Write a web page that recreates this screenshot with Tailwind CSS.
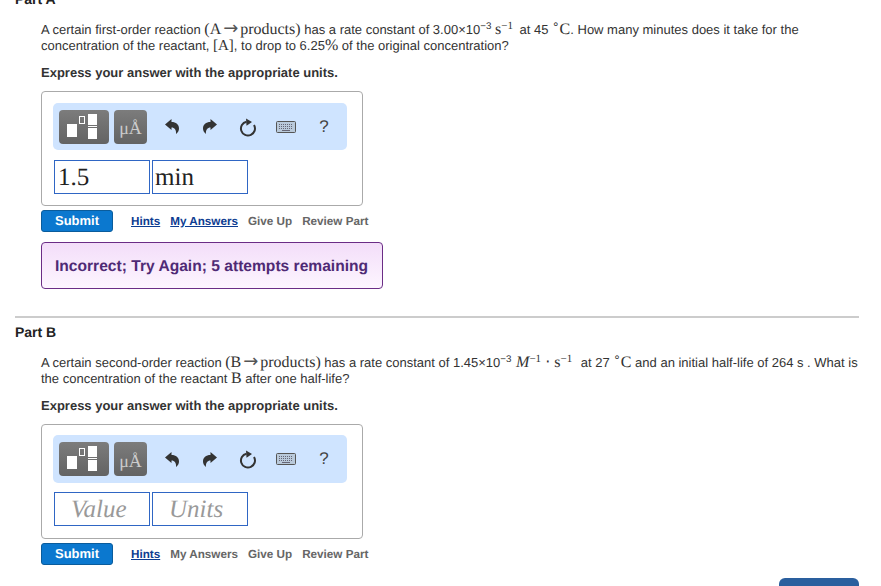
<!DOCTYPE html>
<html lang="en">
<head>
    <meta charset="UTF-8">
    <meta name="viewport" content="width=device-width, initial-scale=1.0">
    <title>Part A and B</title>
    <script src="https://cdn.jsdelivr.net/npm/@tailwindcss/browser@4"></script>
</head>
<body class="bg-white h-[586px] overflow-hidden relative [text-rendering:geometricPrecision] font-['Liberation_Sans',Arial,sans-serif] text-[13px] leading-[16px] text-[#333]">
    <div class="pl-[15px] w-[859px] -mt-[9px]">
        <!-- Part A -->
        <h2 class="text-[14px] leading-[16px] font-bold text-[#222]">Part A</h2>
        <div class="pl-[26px] pt-[15px]">
            <p class="w-[800px]">A certain first-order reaction <span class="font-['Liberation_Serif',serif] text-[16px]">(A<span class="inline-block w-[19px] text-center font-['DejaVu_Sans',sans-serif] text-[18px] leading-[0] text-[#555]">→</span>products)</span> has a rate constant of 3.00×10<sup>−3</sup> <span class="font-['Liberation_Serif',serif] text-[16px]">s<sup class="text-[11px]">−1</sup></span><span class="ml-[3px]"> at 45</span> <span class="font-['Liberation_Serif',serif] text-[16px]"><sup>∘</sup>C</span>. How many minutes does it take for the concentration of the reactant, <span class="font-['Liberation_Serif',serif] text-[15px]">[A]</span>, to drop to 6.25<span class="font-['Liberation_Serif',serif] text-[16px]">%</span> of the original concentration?</p>
            <p class="mt-[11px] font-bold">Express your answer with the appropriate units.</p>

            <div class="mt-[10px] w-[322px] h-[115px] border border-[#aaa] rounded-[4px] pt-[11px] pl-[11px]">
                <div class="w-[294px] h-[47px] bg-[#cfe4ff] rounded-[5px] flex items-center pl-[6px]">
                    <div class="w-[50px] h-[34px] rounded-[4px] bg-gradient-to-b from-[#7c7c7c] to-[#636363]">
                        <svg width="50" height="34" fill="#fff"><rect x="8" y="14" width="10" height="13"/><rect x="20.5" y="6.5" width="5" height="7" fill="none" stroke="#fff"/><rect x="29" y="4" width="9" height="11"/><rect x="29" y="16" width="9" height="1"/><rect x="29" y="18" width="9" height="11"/></svg>
                    </div>
                    <div class="ml-[5px] w-[33px] h-[34px] rounded-[4px] bg-gradient-to-b from-[#7c7c7c] to-[#636363] flex items-center justify-center font-['Liberation_Serif',serif] text-[18px] text-[#ccc] pt-[3px]">μÅ</div>
                    <div class="ml-[6px] flex items-center">
                        <div class="w-[38px] flex justify-center">
                            <svg width="16" height="17" viewBox="0 0 16 17" fill="#333"><path d="M1 6.500 L7.500 1 V4 C12 4 15 6.500 15 10.500 C15 12.500 14 14.500 12 16 C12.500 12 10.500 9.500 7.500 9.500 V12 Z"/></svg>
                        </div>
                        <div class="w-[38px] flex justify-center">
                            <svg width="16" height="17" viewBox="0 0 16 17" fill="#333"><path d="M15 6.500 L8.500 1 V4 C4 4 1 6.500 1 10.500 C1 12.500 2 14.500 4 16 C3.500 12 5.500 9.500 8.500 9.500 V12 Z"/></svg>
                        </div>
                        <div class="w-[38px] flex justify-center">
                            <svg width="18" height="20" viewBox="0 0 18 20" fill="none"><path d="M7.500 4.700 A7 7 0 1 0 15 8" stroke="#333" stroke-width="2"/><path d="M7 1.500 L13 5 L7.500 8.800 Z" fill="#333"/></svg>
                        </div>
                        <div class="w-[38px] flex justify-center">
                            <svg width="20" height="12" viewBox="0 0 20 12"><rect x="0.500" y="0.500" width="19" height="11" rx="1" fill="#b9c9da" stroke="#555"/><path d="M3 3.500H17M3 5.500H17M3 7.500H17" stroke="#667" stroke-dasharray="1 1"/><path d="M6 9.500H14" stroke="#667"/></svg>
                        </div>
                        <div class="w-[38px] text-center text-[17px] text-[#444]">?</div>
                    </div>
                </div>
                <div class="mt-[10px] ml-[1px] flex gap-[2px] font-['Liberation_Serif',serif] text-[25px] text-[#222]">
                    <div class="w-[96px] h-[34px] border border-[#2f66c4] pl-[3px] leading-[33px]">1.5</div>
                    <div class="w-[96px] h-[34px] border border-[#2f66c4] pl-[2px] leading-[33px]">min</div>
                </div>
            </div>

            <div class="mt-[4px] flex items-center font-bold text-[11.7px]">
                <div class="w-[72px] h-[22px] rounded-[3px] bg-[#0b78cf] border border-[#0a5c9c] text-white text-[13px] leading-[20px] text-center">Submit</div>
                <div class="ml-[18px] mt-[2px] flex gap-[10px]">
                    <a class="text-[#0d3c91] underline">Hints</a>
                    <a class="text-[#0d3c91] underline">My Answers</a>
                    <span class="text-[#666]">Give Up</span>
                    <span class="text-[#666]">Review Part</span>
                </div>
            </div>

            <div class="mt-[10px] w-[342px] h-[47px] border border-[#6b2d86] rounded-[4px] bg-gradient-to-b from-[#f3def9] to-[#fdf5ff] pl-[13px] text-[15.6px] leading-[47px] font-bold text-[#4f2a75]">Incorrect; Try Again; 5 attempts remaining</div>
        </div>

        <hr class="mt-[27px] border-0 h-[2px] bg-[#ccc]">

        <!-- Part B -->
        <h2 class="mt-[6px] text-[14px] leading-[16px] font-bold text-[#222]">Part B</h2>
        <div class="pl-[26px] pt-[15px]">
            <p>A certain second-order reaction <span class="font-['Liberation_Serif',serif] text-[16px]">(B<span class="inline-block w-[19px] text-center font-['DejaVu_Sans',sans-serif] text-[18px] leading-[0] text-[#555]">→</span>products)</span> has a rate constant of 1.45×10<sup>−3</sup> <span class="font-['Liberation_Serif',serif] text-[16px]"><i class="ml-[1px]">M</i><sup class="text-[11px]">−1</sup> ⋅ s<sup class="text-[11px]">−1</sup></span><span class="ml-[5px]"> at 27</span> <span class="font-['Liberation_Serif',serif] text-[16px]"><sup>∘</sup>C</span> and an initial half-life of 264 s . What is the concentration of the reactant <span class="font-['Liberation_Serif',serif] text-[16px]">B</span> after one half-life?</p>
            <p class="mt-[11px] font-bold">Express your answer with the appropriate units.</p>

            <div class="mt-[10px] w-[322px] h-[115px] border border-[#aaa] rounded-[4px] pt-[10px] pl-[11px]">
                <div class="w-[294px] h-[48px] bg-[#cfe4ff] rounded-[5px] flex items-center pl-[6px]">
                    <div class="w-[50px] h-[34px] rounded-[4px] bg-gradient-to-b from-[#7c7c7c] to-[#636363]">
                        <svg width="50" height="34" fill="#fff"><rect x="8" y="14" width="10" height="13"/><rect x="20.5" y="6.5" width="5" height="7" fill="none" stroke="#fff"/><rect x="29" y="4" width="9" height="11"/><rect x="29" y="16" width="9" height="1"/><rect x="29" y="18" width="9" height="11"/></svg>
                    </div>
                    <div class="ml-[5px] w-[33px] h-[34px] rounded-[4px] bg-gradient-to-b from-[#7c7c7c] to-[#636363] flex items-center justify-center font-['Liberation_Serif',serif] text-[18px] text-[#ccc] pt-[3px]">μÅ</div>
                    <div class="ml-[6px] flex items-center">
                        <div class="w-[38px] flex justify-center">
                            <svg width="16" height="17" viewBox="0 0 16 17" fill="#333"><path d="M1 6.500 L7.500 1 V4 C12 4 15 6.500 15 10.500 C15 12.500 14 14.500 12 16 C12.500 12 10.500 9.500 7.500 9.500 V12 Z"/></svg>
                        </div>
                        <div class="w-[38px] flex justify-center">
                            <svg width="16" height="17" viewBox="0 0 16 17" fill="#333"><path d="M15 6.500 L8.500 1 V4 C4 4 1 6.500 1 10.500 C1 12.500 2 14.500 4 16 C3.500 12 5.500 9.500 8.500 9.500 V12 Z"/></svg>
                        </div>
                        <div class="w-[38px] flex justify-center">
                            <svg width="18" height="20" viewBox="0 0 18 20" fill="none"><path d="M7.500 4.700 A7 7 0 1 0 15 8" stroke="#333" stroke-width="2"/><path d="M7 1.500 L13 5 L7.500 8.800 Z" fill="#333"/></svg>
                        </div>
                        <div class="w-[38px] flex justify-center">
                            <svg width="20" height="12" viewBox="0 0 20 12"><rect x="0.500" y="0.500" width="19" height="11" rx="1" fill="#b9c9da" stroke="#555"/><path d="M3 3.500H17M3 5.500H17M3 7.500H17" stroke="#667" stroke-dasharray="1 1"/><path d="M6 9.500H14" stroke="#667"/></svg>
                        </div>
                        <div class="w-[38px] text-center text-[17px] text-[#444]">?</div>
                    </div>
                </div>
                <div class="mt-[9px] ml-[1px] flex gap-[2px] font-['Liberation_Serif',serif] italic text-[25px] text-[#999]">
                    <div class="w-[96px] h-[34px] border border-[#2f66c4] pl-[16px] leading-[33px]">Value</div>
                    <div class="w-[96px] h-[34px] border border-[#2f66c4] pl-[16px] leading-[33px]">Units</div>
                </div>
            </div>

            <div class="mt-[4px] flex items-center font-bold text-[11.7px]">
                <div class="w-[72px] h-[22px] rounded-[3px] bg-[#0b78cf] border border-[#0a5c9c] text-white text-[13px] leading-[20px] text-center">Submit</div>
                <div class="ml-[18px] mt-[2px] flex gap-[10px]">
                    <a class="text-[#0d3c91] underline">Hints</a>
                    <span class="text-[#666]">My Answers</span>
                    <span class="text-[#666]">Give Up</span>
                    <span class="text-[#666]">Review Part</span>
                </div>
            </div>
        </div>
    </div>
    <!-- Continue button, cut off by the bottom of the window -->
    <div class="absolute left-[779px] top-[578px] w-[80px] h-[30px] rounded-[6px] bg-[#2a5f9e] text-white text-[14px] font-bold text-center leading-[26px] pt-[1px]">Continue</div>
</body>
</html>
